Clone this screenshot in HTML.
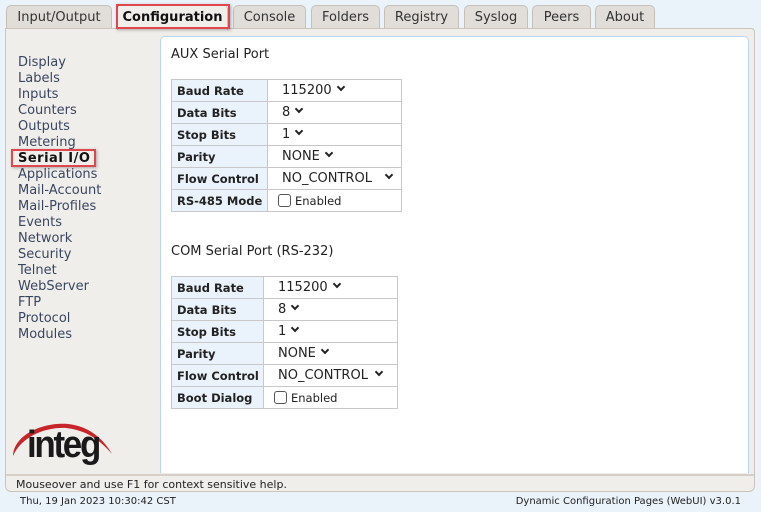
<!DOCTYPE html>
<html><head><style>
*{margin:0;padding:0;box-sizing:border-box}
body{width:761px;height:512px;background:#eaf2fa;font-family:"DejaVu Sans",Verdana,sans-serif;position:relative;overflow:hidden;color:#222}
.tab{position:absolute;top:5px;height:24px;background:#e1ddd8;border:1px solid #c6c0b8;border-bottom:none;border-radius:5px 5px 0 0;font-size:13px;color:#333;text-align:center;line-height:24px;z-index:1}
.tab.act{background:#f0eeeb;color:#111;font-weight:bold;top:4px;height:26px;z-index:3}
.redbox{position:absolute;border:2px solid #e0474c;box-shadow:1px 1px 3px rgba(0,0,0,.3);z-index:4}
#outer{position:absolute;left:5px;top:28px;width:750px;height:464px;background:#f0eeeb;border:1px solid #cbc4ba;border-radius:0 4px 6px 6px;z-index:2}
#content{position:absolute;left:160px;top:36px;width:589px;height:437px;background-color:#ffffff;border:1px solid #b9d6ee;border-radius:5px 5px 0 0;border-bottom:none;z-index:3}
#side{position:absolute;left:18px;top:55px;font-size:13px;line-height:16px;color:#3a4660;z-index:3}
.h{position:absolute;left:171px;font-size:13px;color:#222;z-index:5}
table{position:absolute;left:171px;border-collapse:collapse;font-size:11.5px;z-index:5;background:#fff}
td{border:1px solid #c8c8c8;height:22px;padding:0 0 0 5px}
td.l{background:#eaf2fb;font-weight:bold;color:#222}
td.v{font-size:13px;padding-left:14px;color:#222}
.ch{display:inline-block;width:6px;height:6px;border-right:2px solid #222;border-bottom:2px solid #222;transform:rotate(45deg);margin-left:6px;position:relative;top:-4px}
.cb{display:inline-block;width:13px;height:13px;border:1px solid #555;border-radius:3px;vertical-align:-2px;margin-right:4px}
#status{position:absolute;left:6px;top:474px;width:748px;height:17px;border-top:2px solid #d5cfc7;font-size:11px;padding-left:10px;line-height:18px;color:#222;z-index:3}
.z{z-index:5}
</style></head><body>
<div class="tab" style="left:6px;width:106px">Input/Output</div>
<div class="tab" style="left:233px;width:73px">Console</div>
<div class="tab" style="left:311px;width:69px">Folders</div>
<div class="tab" style="left:384px;width:75px">Registry</div>
<div class="tab" style="left:464px;width:64px">Syslog</div>
<div class="tab" style="left:532px;width:59px">Peers</div>
<div class="tab" style="left:595px;width:60px">About</div>
<div id="outer"></div>
<div id="content"></div>
<div class="tab act" style="left:117px;width:111px;line-height:25px">Configuration</div>
<div class="redbox" style="left:116px;top:4px;width:114px;height:25px"></div>
<div id="side">Display<br>Labels<br>Inputs<br>Counters<br>Outputs<br>Metering<br><b style="color:#111;letter-spacing:0.5px">Serial I/O</b><br>Applications<br>Mail-Account<br>Mail-Profiles<br>Events<br>Network<br>Security<br>Telnet<br>WebServer<br>FTP<br>Protocol<br>Modules</div>
<div class="redbox" style="left:11px;top:149px;width:85px;height:18px"></div>
<div class="h" style="top:47px">AUX Serial Port</div>
<table style="top:79px;width:231px">
<tr><td class="l" style="width:96px">Baud Rate</td><td class="v">115200<span class="ch"></span></td></tr>
<tr><td class="l">Data Bits</td><td class="v">8<span class="ch"></span></td></tr>
<tr><td class="l">Stop Bits</td><td class="v">1<span class="ch"></span></td></tr>
<tr><td class="l">Parity</td><td class="v">NONE<span class="ch"></span></td></tr>
<tr><td class="l">Flow Control</td><td class="v">NO_CONTROL <span class="ch" style="margin-left:10px"></span></td></tr>
<tr><td class="l">RS-485 Mode</td><td class="v" style="padding-left:10px;font-size:11.5px"><span class="cb"></span>Enabled</td></tr>
</table>
<div class="h" style="top:244px">COM Serial Port (RS-232)</div>
<table style="top:276px;width:227px">
<tr><td class="l" style="width:92px">Baud Rate</td><td class="v">115200<span class="ch"></span></td></tr>
<tr><td class="l">Data Bits</td><td class="v">8<span class="ch"></span></td></tr>
<tr><td class="l">Stop Bits</td><td class="v">1<span class="ch"></span></td></tr>
<tr><td class="l">Parity</td><td class="v">NONE<span class="ch"></span></td></tr>
<tr><td class="l">Flow Control</td><td class="v">NO_CONTROL <span class="ch" style="margin-left:4px"></span></td></tr>
<tr><td class="l">Boot Dialog</td><td class="v" style="padding-left:10px;font-size:11.5px"><span class="cb"></span>Enabled</td></tr>
</table>
<svg class="z" style="position:absolute;left:8px;top:418px" width="110" height="50"><path d="M5 38 C6 16 36 4 60 6 C80 8 95 20 104 36 C92 22 78 12 58 10 C38 9 14 18 5 38Z" fill="#c6262a"/></svg>
<div class="z" style="position:absolute;left:27px;top:424px;font-family:'Liberation Sans',sans-serif;font-weight:bold;font-size:38px;letter-spacing:-2.5px;color:#1a1a1a;transform:scaleX(0.92);transform-origin:left">integ</div>
<div id="status">Mouseover and use F1 for context sensitive help.</div>
<div style="position:absolute;left:20px;top:496px;font-size:10px;color:#222">Thu, 19 Jan 2023 10:30:42 CST</div>
<div style="position:absolute;right:20px;top:496px;font-size:10px;color:#222">Dynamic Configuration Pages (WebUI) v3.0.1</div>
</body></html>
